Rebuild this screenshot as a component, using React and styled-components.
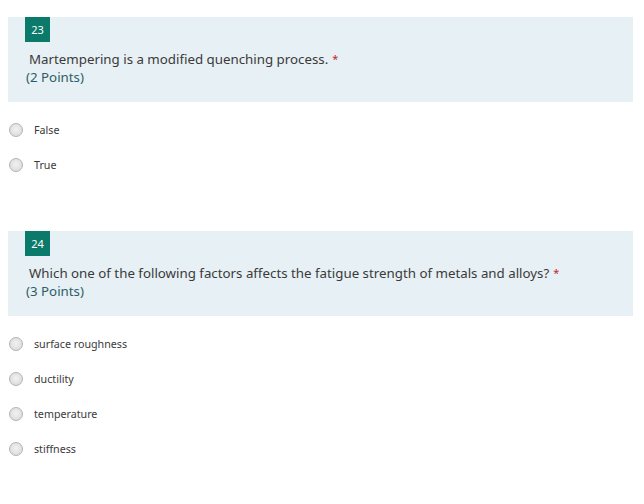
import React from "react";
import styled, { createGlobalStyle } from "styled-components";

const Global = createGlobalStyle`
  body {
    margin: 0;
    background: #ffffff;
    font-family: "Segoe UI", "Noto Sans", sans-serif;
    color: #3a3a3a;
  }
`;

const Page = styled.div`
  width: 644px;
  height: 504px;
  padding: 17px 11px 0 8px;
  box-sizing: border-box;
  display: flex;
  flex-direction: column;
`;

const Question = styled.section`
  display: flex;
  flex-direction: column;
  margin-bottom: ${(p) => p.gap}px;
`;

const Header = styled.div`
  background: #e7f0f4;
  height: 85px;
  padding: 0 0 0 17px;
  box-sizing: border-box;
`;

const Badge = styled.div`
  width: 25px;
  height: 25px;
  background: #0b7a6b;
  color: #ffffff;
  font-size: 11px;
  display: flex;
  align-items: center;
  justify-content: center;
`;

const Title = styled.div`
  margin-top: 8px;
  padding-left: 4px;
  font-size: 13.3px;
  line-height: 18px;
  color: #3a3a3a;
`;

const Star = styled.span`
  color: #c4262e;
  margin-left: 4px;
  font-size: 11px;
  vertical-align: top;
`;

const Points = styled.div`
  padding-left: 1px;
  font-size: 13.3px;
  line-height: 18px;
  color: #2e5d68;
`;

const Options = styled.div`
  display: flex;
  flex-direction: column;
  gap: 21px;
  padding-top: 21px;
`;

const Option = styled.label`
  display: flex;
  align-items: center;
  gap: 11px;
  height: 14px;
  padding-left: 1px;
  font-size: 10.7px;
  color: #3a3a3a;
`;

const Radio = styled.span`
  width: 14px;
  height: 14px;
  border-radius: 50%;
  border: 1px solid #b4b4b4;
  background: radial-gradient(circle at 50% 45%, #f2f2f2 0%, #dedede 70%, #d0d0d0 100%);
  box-sizing: border-box;
  flex: none;
`;

const questions = [
  {
    n: 23,
    text: "Martempering is a modified quenching process.",
    points: "(2 Points)",
    options: ["False", "True"],
    gap: 59,
  },
  {
    n: 24,
    text: "Which one of the following factors affects the fatigue strength of metals and alloys?",
    points: "(3 Points)",
    options: ["surface roughness", "ductility", "temperature", "stiffness"],
    gap: 0,
  },
];

export default function App() {
  return (
    <>
      <Global />
      <Page>
        {questions.map((q) => (
          <Question key={q.n} gap={q.gap}>
            <Header>
              <Badge>{q.n}</Badge>
              <Title>
                {q.text}
                <Star>*</Star>
              </Title>
              <Points>{q.points}</Points>
            </Header>
            <Options>
              {q.options.map((o) => (
                <Option key={o}>
                  <Radio />
                  {o}
                </Option>
              ))}
            </Options>
          </Question>
        ))}
      </Page>
    </>
  );
}
